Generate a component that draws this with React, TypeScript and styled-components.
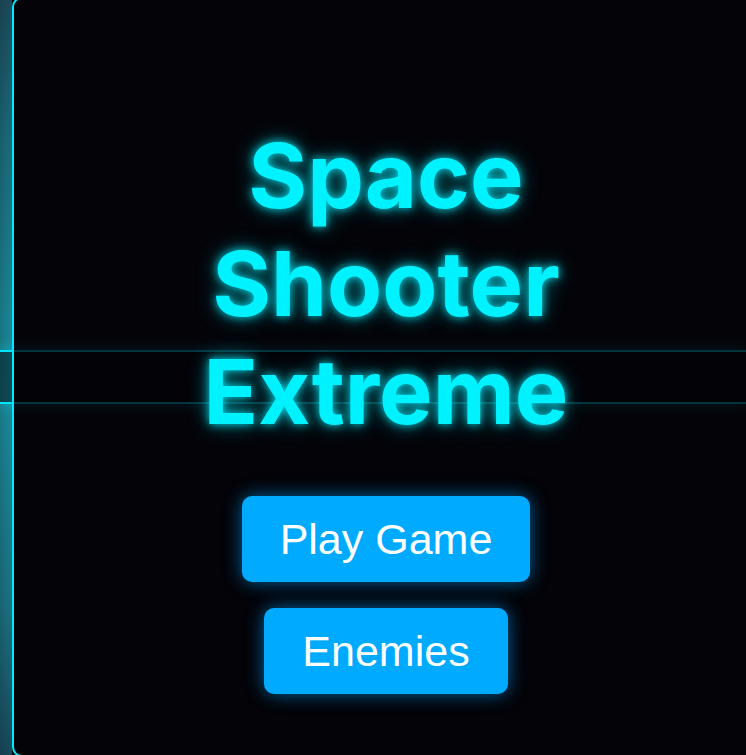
import React from "react";
import styled, { createGlobalStyle } from "styled-components";

const GlobalStyle = createGlobalStyle`
  html, body {
    margin: 0;
    padding: 0;
    height: 100%;
    overflow: hidden;
  }
  body {
    position: relative;
    font-family: "Liberation Sans", Arial, sans-serif;
    background:
      linear-gradient(to right, transparent 12px, #06060c 12px),
      linear-gradient(to right, rgba(0, 0, 0, 0.12), rgba(0, 0, 0, 0) 12px),
      linear-gradient(
        to bottom,
        #1c4a5a 0%,
        #1b6a7a 18%,
        #1c8594 42%,
        #1c8898 55%,
        #1b7282 80%,
        #19485a 100%
      );
  }
`;

/* Horizontal scanline strip that runs across the whole screen */
const Scanline = styled.div`
  position: absolute;
  left: 0;
  right: 0;
  top: 350px;
  height: 50px;
  z-index: 0;
  background: rgba(0, 0, 0, 0.45);
  border-top: 2px solid #00e5ff;
  border-bottom: 2px solid #00e5ff;
  box-shadow: 0 0 14px rgba(0, 229, 255, 0.45);
`;

const Screen = styled.main`
  position: relative;
  z-index: 1;
  box-sizing: border-box;
  width: 748px;
  height: 760px;
  margin: -3px 0 0 12px;
  border: 2px solid #00eaff;
  border-radius: 10px;
  background: rgba(3, 3, 8, 0.78);
  display: flex;
  flex-direction: column;
  align-items: center;
  padding-top: 123px;
`;

const Title = styled.h1`
  margin: 0 0 50px;
  max-width: 420px;
  font-family: Inter, "Liberation Sans", sans-serif;
  font-weight: 700;
  font-size: 90px;
  line-height: 1.2;
  text-align: center;
  color: #00f2ff;
  text-shadow: 0 0 10px rgba(0, 242, 255, 0.9), 0 0 22px rgba(0, 242, 255, 0.45);
`;

const Menu = styled.nav`
  display: flex;
  flex-direction: column;
  align-items: center;
  gap: 26px;
`;

const MenuButton = styled.button`
  font-family: "Liberation Sans", Arial, sans-serif;
  font-size: 43px;
  line-height: 48px;
  color: #ffffff;
  background: #00aaff;
  border: none;
  border-radius: 10px;
  padding: 19px 38px;
  cursor: pointer;
  box-shadow: 0 0 18px rgba(0, 160, 255, 0.6);
`;

export default function App() {
  return (
    <>
      <GlobalStyle />
      <Scanline />
      <Screen>
        <Title>Space Shooter Extreme</Title>
        <Menu>
          <MenuButton>Play Game</MenuButton>
          <MenuButton>Enemies</MenuButton>
        </Menu>
      </Screen>
    </>
  );
}
